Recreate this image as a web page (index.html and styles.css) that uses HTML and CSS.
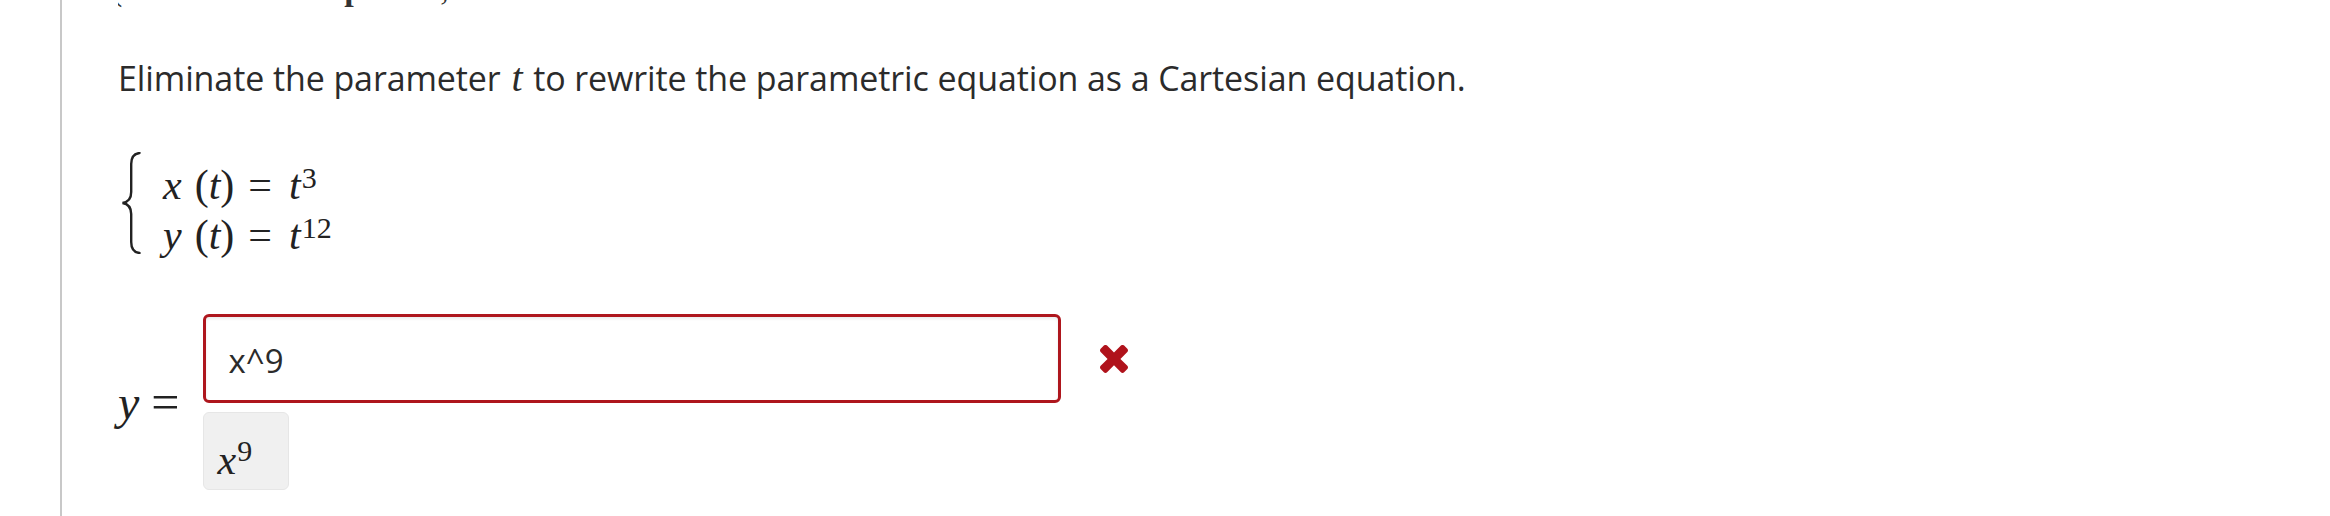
FILE: index.html
```html
<!DOCTYPE html>
<html lang="en">
<head>
<meta charset="utf-8">
<title>Parametric equation</title>
<link rel="stylesheet" href="styles.css">
</head>
<body>
<div class="page">
  <div class="content">
    <div class="prev-line">
      <span class="frag frag-a">(</span><span class="frag frag-b">p</span><span class="frag frag-c">,</span>
    </div>

    <p class="question">Eliminate the parameter <span class="mi">t</span> to rewrite the parametric equation as a Cartesian equation.</p>

    <div class="system">
      <svg class="brace" width="20" height="102" viewBox="0 0 20 102" aria-hidden="true">
        <path d="M18.5,1 C13,1.6 10.2,5 10.2,12 L10.2,40 C10.2,46.5 7.5,50 1.5,51 C7.5,52 10.2,55.5 10.2,62 L10.2,90 C10.2,97 13,100.4 18.5,101" fill="none" stroke="#222" stroke-width="2.4" stroke-linecap="round"/>
      </svg>
      <div class="rows">
        <div class="row"><span class="mi">x</span><span class="mo paren-l">(</span><span class="mi">t</span><span class="mo">)</span><span class="eq">=</span><span class="mi">t</span><span class="sup">3</span></div>
        <div class="row"><span class="mi">y</span><span class="mo paren-l">(</span><span class="mi">t</span><span class="mo">)</span><span class="eq">=</span><span class="mi">t</span><span class="sup">12</span></div>
      </div>
    </div>

    <div class="answer">
      <div class="label"><span class="mi">y</span><span class="eq-label">=</span></div>
      <div class="fields">
        <div class="input-row">
          <div class="input">x^9</div>
          <svg class="wrong" width="28" height="28" viewBox="110 372 1188 1182" aria-label="incorrect">
            <path d="M1298 1322q0 40-28 68l-136 136q-28 28-68 28t-68-28l-294-294-294 294q-28 28-68 28t-68-28l-136-136q-28-28-28-68t28-68l294-294-294-294q-28-28-28-68t28-68l136-136q28-28 68-28t68 28l294 294 294-294q28-28 68-28t68 28l136 136q28 28 28 68t-28 68l-294 294 294 294q28 28 28 68z" fill="#b0121b"/>
          </svg>
        </div>
        <div class="preview"><span class="mi">x</span><span class="sup sup-prev">9</span></div>
      </div>
    </div>
  </div>
</div>
</body>
</html>
```

FILE: styles.css
```css
html, body {
  margin: 0;
  padding: 0;
  background: #ffffff;
}

.page {
  width: 2330px;
  height: 516px;
  overflow: hidden;
  padding-left: 60px;
  box-sizing: border-box;
}

.content {
  height: 516px;
  border-left: 2px solid #c8c8c8;
  padding-left: 56px;
  box-sizing: border-box;
  color: #2b2b2b;
  font-family: "Open Sans", "Liberation Sans", sans-serif;
}

.prev-line {
  height: 10px;
  overflow: hidden;
  display: flex;
  font-family: "Liberation Serif", serif;
  font-size: 34px;
}

.frag {
  display: block;
  line-height: 44px;
  margin-top: -33px;
  color: #333;
}

.frag-a { margin-left: -7px; }
.frag-b { margin-left: 222px; font-weight: bold; }
.frag-c { margin-left: 77px; }

.question {
  margin: 46px 0 0 0;
  font-size: 34px;
  line-height: 44px;
  letter-spacing: -0.1px;
}

.mi {
  font-family: "Liberation Serif", "Times New Roman", serif;
  font-style: italic;
}

.question .mi {
  font-size: 40px;
  padding: 0 2px;
}

.system {
  margin-top: 52px;
  display: flex;
  align-items: center;
}

.brace {
  display: block;
  margin-left: 3px;
}

.rows {
  margin-left: 22px;
  display: flex;
  flex-direction: column;
}

.row {
  font-family: "Liberation Serif", "Times New Roman", serif;
  font-size: 42px;
  line-height: 50px;
  height: 50px;
  color: #222;
  white-space: nowrap;
}

.mo {
  font-style: normal;
}

.paren-l {
  margin-left: 13px;
}

.eq {
  margin: 0 17px 0 14px;
}

.sup {
  font-family: "Liberation Serif", "Times New Roman", serif;
  font-size: 30px;
  vertical-align: 11px;
  margin-left: 1px;
}

.answer {
  margin-top: 60px;
  display: flex;
  align-items: center;
}

.label {
  font-family: "Liberation Serif", "Times New Roman", serif;
  font-size: 48px;
  line-height: 60px;
  color: #222;
  white-space: nowrap;
}

.eq-label {
  margin-left: 12px;
  font-size: 50px;
}

.fields {
  margin-left: 23px;
  display: flex;
  flex-direction: column;
  gap: 9px;
}

.input-row {
  display: flex;
  align-items: center;
  gap: 39px;
}

.input {
  width: 858px;
  height: 89px;
  box-sizing: border-box;
  border: 3px solid #ae161d;
  border-radius: 6px;
  box-shadow: inset 0 2px 3px rgba(0, 0, 0, 0.08);
  padding: 3px 0 0 23px;
  display: flex;
  align-items: center;
  font-family: "Open Sans", "Liberation Sans", sans-serif;
  font-size: 33px;
  color: #2b2b2b;
}

.wrong {
  display: block;
}

.preview {
  align-self: flex-start;
  min-width: 86px;
  height: 78px;
  box-sizing: border-box;
  padding: 0 14px;
  background: #f0f0f0;
  border: 1px solid #e6e6e6;
  border-radius: 6px;
  font-family: "Liberation Serif", "Times New Roman", serif;
  font-size: 42px;
  line-height: 76px;
  color: #222;
  white-space: nowrap;
}

.sup-prev {
  vertical-align: 13px;
}
```
